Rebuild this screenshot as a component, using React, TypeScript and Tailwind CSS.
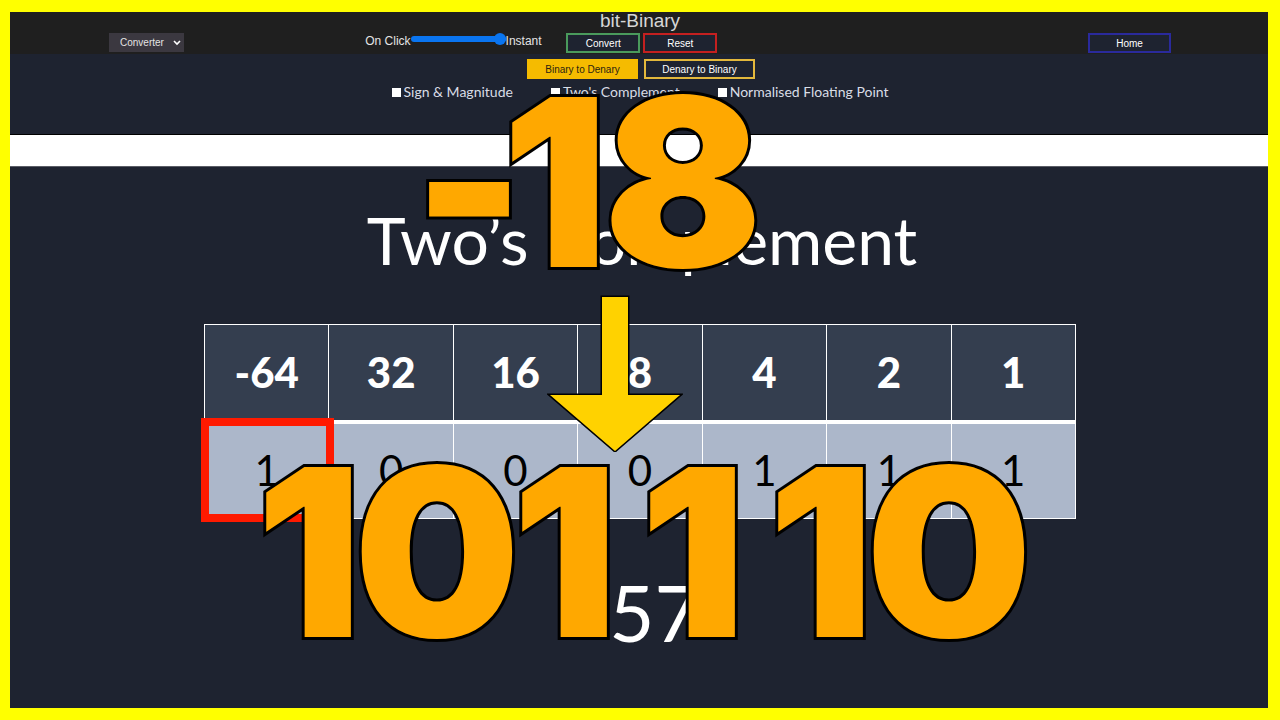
import { useState } from 'react';

const columns = [
  { weight: '-64', bit: '1' },
  { weight: '32', bit: '0' },
  { weight: '16', bit: '0' },
  { weight: '8', bit: '0' },
  { weight: '4', bit: '1' },
  { weight: '2', bit: '1' },
  { weight: '1', bit: '1' },
];

const options = ["Sign & Magnitude", "Two's Complement", 'Normalised Floating Point'];

const Header = () => {
  return (
    <header className="h-[42px] bg-[#1f1f1f] text-[#e4e4e4]">
      <h1 className="pl-0.5 text-center text-[19px] leading-[18px] text-[#d6d6d6]">bit-Binary</h1>
      <div className="flex items-start pt-[3px]">
        <div className="w-[28%] pl-[99px]">
          <div className="relative w-[75px]">
            <select
              aria-label="Mode"
              defaultValue="Converter"
              className="block h-[19px] w-full appearance-none bg-[#3b3840] pl-[11px] text-[10px] leading-[19px] text-[#e4e4e4]"
            >
              <option>Converter</option>
            </select>
            <svg className="pointer-events-none absolute top-[7px] right-[3px] h-[6px] w-[8px]" viewBox="0 0 8 6" fill="none" stroke="#fff" strokeWidth="1.6">
              <path d="M1 1l3 3 3-3" />
            </svg>
          </div>
        </div>
        <div className="flex w-[204px] pl-[3px] text-xs leading-[17px]">
          <label htmlFor="speed">On Click</label>
          <input
            id="speed"
            type="range"
            defaultValue={100}
            className="h-[12px] w-[95px] appearance-none bg-transparent [&::-webkit-slider-runnable-track]:h-[6px] [&::-webkit-slider-runnable-track]:rounded-full [&::-webkit-slider-runnable-track]:bg-[#0a75f0] [&::-webkit-slider-thumb]:-mt-[3px] [&::-webkit-slider-thumb]:h-[12px] [&::-webkit-slider-thumb]:w-[12px] [&::-webkit-slider-thumb]:appearance-none [&::-webkit-slider-thumb]:rounded-full [&::-webkit-slider-thumb]:bg-[#0a75f0]"
          />
          <span>Instant</span>
        </div>
        <div className="flex gap-[3px] text-[10px] font-medium text-white">
          <button className="h-5 w-[74px] border-2 border-[#4a9a5c] bg-[#1e2330]">Convert</button>
          <button className="h-5 w-[74px] border-2 border-[#c42020] bg-[#1e2330]">Reset</button>
        </div>
        <a href="#" className="mr-[97px] ml-auto h-5 w-[83px] border-2 border-[#2a2a9c] bg-[#1e2330] text-center text-[10px] leading-[17px] font-medium text-white">
          Home
        </a>
      </div>
    </header>
  );
};

const Toolbar = () => {
  const [mode, setMode] = useState('binary');

  return (
    <div className="h-[81px] border-b border-black pt-[5px]">
      <div className="flex justify-center gap-[6px] pl-1 text-[10px]">
        <button
          onClick={() => setMode('binary')}
          className={mode === 'binary' ? 'h-5 w-[111px] border-2 border-[#f5bb00] bg-[#f5bb00] text-[#2b2410]' : 'h-5 w-[111px] border-2 border-[#e3b83c] text-white'}
        >
          Binary to Denary
        </button>
        <button
          onClick={() => setMode('denary')}
          className={mode === 'denary' ? 'h-5 w-[111px] border-2 border-[#f5bb00] bg-[#f5bb00] text-[#2b2410]' : 'h-5 w-[111px] border-2 border-[#e3b83c] text-white'}
        >
          Denary to Binary
        </button>
      </div>
      <div className="mt-1 flex justify-center gap-[38px] pl-0.5 font-[Lato,sans-serif] text-[14px] leading-[18px] text-[#d9dde6]">
        {options.map((option) => (
          <label key={option} className="flex items-center gap-[3px]">
            <input type="checkbox" className="h-[9px] w-[9px] appearance-none bg-white checked:bg-[#0a75f0]" />
            {option}
          </label>
        ))}
      </div>
    </div>
  );
};

const Slide = () => {
  return (
    <main className="flex-1 border-t border-[#5a5d66] pl-0.5 font-[Lato,sans-serif] text-white">
      <h2 className="pt-[33px] pl-1 text-center text-[66px] leading-[80px]">Two’s Complement</h2>
      <table className="mx-auto mt-11 w-[872px] max-w-full table-fixed border-collapse text-center">
        <thead>
          <tr className="h-[97px] bg-[#343e4f] text-[42px]">
            {columns.map((column) => (
              <th key={column.weight} className="border border-b-4 border-white p-0 font-black">{column.weight}</th>
            ))}
          </tr>
        </thead>
        <tbody>
          <tr className="h-[97px] bg-[#acb7ca] text-[42px] text-black">
            {columns.map((column, i) => (
              <td key={column.weight} className="relative border border-white p-0">
                {column.bit}
                {i === 0 && <span className="absolute -top-[6px] -right-[6px] -bottom-1 -left-1 border-8 border-[#ff1a00]" />}
              </td>
            ))}
          </tr>
        </tbody>
      </table>
      <p className="mt-[46px] text-center text-[78px] leading-[94px]">-57</p>
    </main>
  );
};

const BigDigits = ({ digits }: { digits: string }) => {
  return (
    <div className="flex">
      {digits.split('').map((digit, i) => (
        <span key={i} className={digit === '-' ? 'flex w-11 justify-center' : 'flex w-32 justify-center'}>
          {digit}
        </span>
      ))}
    </div>
  );
};

const Overlay = () => {
  return (
    <div className="pointer-events-none absolute inset-0 flex flex-col items-center pt-[75px] font-[Inter,sans-serif] text-[234px] leading-[190px] font-black text-[#ffa800] [-webkit-text-stroke:6px_#000] [paint-order:stroke_fill]">
      <div className="pr-[84px]">
        <BigDigits digits="-18" />
      </div>
      <div className="mt-[17px] pr-12">
        <svg className="block h-[158px] w-[136px]" viewBox="0 0 136 158" fill="#ffd200" stroke="#000" strokeWidth="3">
          <path d="M55 3H81V101H133L68 157L3 101H55Z" />
        </svg>
      </div>
      <div className="mt-[5px] pr-5">
        <BigDigits digits="101110" />
      </div>
    </div>
  );
};

const App = () => {
  return (
    <div className="relative flex min-h-screen flex-col overflow-hidden border-12 border-l-10 border-[#ffff00] bg-[#1e2330] font-['Liberation_Sans',Arial,sans-serif]">
      <Header />
      <Toolbar />
      <div className="h-[31px] bg-white" />
      <Slide />
      <Overlay />
    </div>
  );
};

export default App;
